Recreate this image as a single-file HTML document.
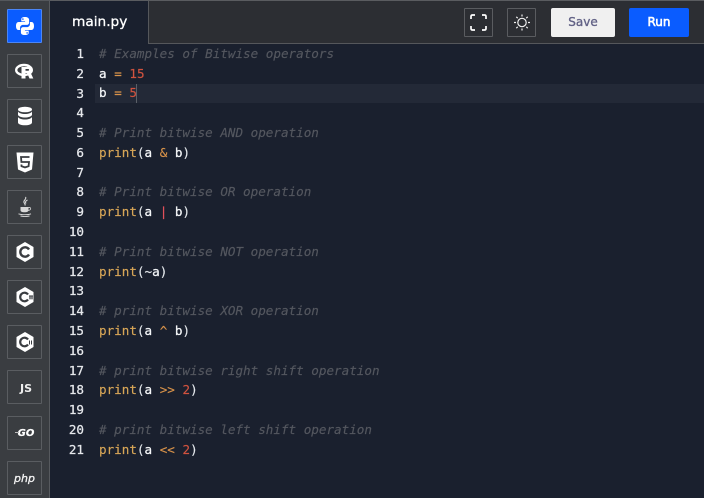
<!DOCTYPE html>
<html><head><meta charset="utf-8">
<style>
*{box-sizing:border-box}
html,body{margin:0;padding:0}
body{width:704px;height:498px;overflow:hidden;background:#1a202e;position:relative;font-family:"DejaVu Sans",sans-serif}
.abs{position:absolute}
#side{left:0;top:0;width:50px;height:498px;background:#3a3d41;border-right:1px solid #575a5e;border-top:1px solid #55585c}
#top{left:50px;top:0;width:654px;height:44px;background:#2c2e33;border-top:1px solid #5a5c60;border-bottom:1px solid #55575b}
#tab{left:50px;top:1px;width:99px;height:43px;background:#1a202e;border-right:1px solid #55575b;color:#fff;font-size:13.700px;-webkit-text-stroke:.3px #fff;line-height:43px;padding-left:22px}
.box{position:absolute;left:7px;width:35px;height:34px;border:1px solid #5a5d61;border-radius:1px;display:flex;align-items:center;justify-content:center}
.box svg{display:block}
.tb{position:absolute;top:8px;width:29px;height:29px;border:1px solid #5a5c60;border-radius:1px}
.btn{position:absolute;top:8px;height:29px;border-radius:2px;text-align:center;font-size:12px;line-height:28px}
#cur{left:95px;top:84px;width:609px;height:19px;background:#232937}
#caret{left:136px;top:84px;width:1px;height:19px;background:#5b6068}
.n,.l{position:absolute;white-space:pre;font-family:"DejaVu Sans Mono",monospace;font-size:12.600px;line-height:20px;height:20px}
.n{left:60px;width:24px;text-align:right;color:#e6e8ec;-webkit-text-stroke:.25px #e6e8ec;margin-top:-.5px}
.l{left:99px;color:#e8eaee;-webkit-text-stroke:.15px}
.c{color:#54575f;font-style:italic}
.f{color:#d8a657}
.o{color:#d9934a}
.d{color:#d0533f}
.v{color:#f4f6f8;-webkit-text-stroke:.25px #f4f6f8}
.p{color:#e4e8ec}
</style></head>
<body>
<div class="abs" id="side">
<div class="box" style="top:8px;background:#0a5cff;border-color:#4c86f5">
<svg width="20" height="20" viewBox="0 0 20 20" fill="#fff"><path d="M9.900 1C6.800 1 6.300 2.200 6.300 3.500V5.400h3.800V6H3.600C2 6 1 7.400 1 10s1 4 2.400 4h1.700v-2.200c0-1.600 1.300-2.900 2.900-2.900h3.900c1.200 0 2.200-1 2.200-2.300V3.500C13.800 2 12.500 1 9.900 1zM7.900 2.300a.8.8 0 1 1 0 1.600.8.8 0 0 1 0-1.600z"/><path d="M10.100 19c3.100 0 3.600-1.200 3.600-2.500v-1.900H9.900V14h6.500c1.600 0 2.600-1.400 2.600-4s-1-4-2.400-4h-1.700v2.200c0 1.600-1.300 2.900-2.900 2.900H8.100c-1.200 0-2.200 1-2.200 2.300v3.100c0 1.500 1.300 2.500 3.900 2.500zm2-1.300a.8.8 0 1 1 0-1.600.8.8 0 0 1 0 1.600z"/></svg></div>
<div class="box" style="top:53px"><svg width="22" height="19" viewBox="0 0 22 19"><ellipse cx="10" cy="8" rx="7.800" ry="5" fill="none" stroke="#fff" stroke-width="2.400"/><path d="M7.500 5h7.800c3.200 0 3.500 4 1 5l3 6.500h-3.800l-2.400-5.500h-1.600v5.500H7.500z" fill="#fff"/><path d="M11.500 7h2.800c1 0 1 1.700 0 1.700h-2.800z" fill="#3a3d41"/></svg></div>
<div class="box" style="top:98px"><svg width="16" height="20" viewBox="0 0 16 20" fill="#fff"><ellipse cx="8" cy="3.500" rx="7" ry="2.800"/><path d="M1 5.500c1 1.700 3.700 2.500 7 2.500s6-.8 7-2.500V9c-1 1.700-3.700 2.500-7 2.500S2 10.700 1 9z"/><path d="M1 11c1 1.700 3.700 2.500 7 2.500s6-.8 7-2.500v5.500c0 1.600-3.100 2.800-7 2.800s-7-1.200-7-2.800z"/></svg></div>
<div class="box" style="top:144px"><svg width="18" height="21" viewBox="0 0 18 21"><path d="M.5 .5h17l-1.500 17L9 20.500 2 17.500z" fill="#fff"/><path d="M13.500 5H5l.4 5h7.600l-.4 4.200-3.600 1.200-3.500-1.200-.1-1.700" fill="none" stroke="#3a3d41" stroke-width="1.800"/></svg></div>
<div class="box" style="top:189px"><svg width="16" height="22" viewBox="0 0 16 22" fill="none" stroke="#d8d8d8"><path d="M8.500 1c1.500 2-2.500 3.500-1.500 5.500.5 1 1.500 1.500 1 3M10.500 4c-2 1-2.500 2-1.500 3.500" stroke-width="1.100"/><path d="M3.500 11h8v3c0 1.500-1.300 2.300-4 2.300s-4-.8-4-2.300z" fill="#d8d8d8" stroke="none"/><path d="M11.500 11.500c3-.5 3 2.500-.5 3" stroke-width=".8"/><path d="M1.500 17.800c3 1.200 10 1.200 12.500 0M3.500 20c2.500.6 6.500.6 9 0" stroke-width=".9"/></svg></div>
<div class="box" style="top:234px"><svg width="20" height="22" viewBox="0 0 20 22"><path d="M10 1l8.500 5v10L10 21l-8.500-5V6z" fill="#fff"/><path d="M14 13.500a4.700 4.700 0 1 1 0-5" fill="none" stroke="#3a3d41" stroke-width="2.400"/></svg></div>
<div class="box" style="top:279px"><svg width="20" height="22" viewBox="0 0 20 22"><path d="M10 1l8.500 5v10L10 21l-8.500-5V6z" fill="#fff"/><path d="M13 13.500a4.300 4.300 0 1 1 0-5" fill="none" stroke="#3a3d41" stroke-width="2.200"/><path d="M14 10.200h4M14 12h4M15 9v4.500M17 9v4.500" stroke="#3a3d41" stroke-width=".8"/></svg></div>
<div class="box" style="top:324px"><svg width="20" height="22" viewBox="0 0 20 22"><path d="M10 1l8.500 5v10L10 21l-8.500-5V6z" fill="#fff"/><path d="M13 13.500a4.300 4.300 0 1 1 0-5" fill="none" stroke="#3a3d41" stroke-width="2.200"/><path d="M14.500 9.500v4M16.500 9.500v4" stroke="#3a3d41" stroke-width="1"/></svg></div>
<div class="box" style="top:369px;color:#eee;font-size:11px;font-weight:700;padding-left:3px;padding-top:3px">JS</div>
<div class="box" style="top:415px;color:#fff;font-size:10px;font-weight:700;font-style:italic;padding-left:3px;-webkit-text-stroke:.2px #fff"><span style="position:absolute;left:7px;top:15px;width:4px;height:1px;background:#bbb"></span>GO</div>
<div class="box" style="top:460px;color:#f4f4f4;font-size:11px;font-style:italic;-webkit-text-stroke:.3px #f4f4f4">php</div>
</div>
<div class="abs" id="top"></div>
<div class="abs" id="tab">main.py</div>
<div class="tb" style="left:464px"><svg width="27" height="27" viewBox="0 0 27 27" fill="none" stroke="#fff" stroke-width="1.700"><path d="M6 10V7.500Q6 6 7.500 6H10M17 6h2.500Q21 6 21 7.500V10M21 17v2.500Q21 21 19.500 21H17M10 21H7.500Q6 21 6 19.500V17"/></svg></div>
<div class="tb" style="left:507px"><svg width="27" height="27" viewBox="0 0 27 27" fill="none" stroke="#f0f0f0" stroke-width="1.200"><circle cx="14" cy="13.500" r="4.200"/><path d="M14 5.500v2M14 19.500v2M6 13.500h2M20 13.500h2M8.300 7.800l1.400 1.400M18.300 17.800l1.400 1.400M8.300 19.200l1.400-1.400M18.300 9.200l1.400-1.400"/></svg></div>
<div class="btn" style="left:551px;width:64px;background:#f0f0f0;color:#626286;-webkit-text-stroke:.35px #626286">Save</div>
<div class="btn" style="left:629px;width:60px;background:#0a5cff;color:#fff;-webkit-text-stroke:.6px #fff">Run</div>

<div class="abs" id="cur"></div>
<div class="abs" id="caret"></div>

<div class="n" style="top:44px">1</div><div class="l c" style="top:44px"># Examples of Bitwise operators</div>
<div class="n" style="top:64px">2</div><div class="l" style="top:64px"><span class="v">a</span> <span class="o">=</span> <span class="d">15</span></div>
<div class="n" style="top:84px">3</div><div class="l" style="top:83px"><span class="v">b</span> <span class="o">=</span> <span class="d">5</span></div>
<div class="n" style="top:103px">4</div>
<div class="n" style="top:123px">5</div><div class="l c" style="top:123px"># Print bitwise AND operation</div>
<div class="n" style="top:143px">6</div><div class="l" style="top:143px"><span class="f">print</span><span class="p">(</span><span class="v">a</span> <span class="o">&amp;</span> <span class="v">b</span><span class="p">)</span></div>
<div class="n" style="top:163px">7</div>
<div class="n" style="top:182px">8</div><div class="l c" style="top:182px"># Print bitwise OR operation</div>
<div class="n" style="top:202px">9</div><div class="l" style="top:202px"><span class="f">print</span><span class="p">(</span><span class="v">a</span> <span style="color:#e0505a">|</span> <span class="v">b</span><span class="p">)</span></div>
<div class="n" style="top:222px">10</div>
<div class="n" style="top:242px">11</div><div class="l c" style="top:242px"># Print bitwise NOT operation</div>
<div class="n" style="top:262px">12</div><div class="l" style="top:262px"><span class="f">print</span><span class="p">(</span><span class="p">~</span><span class="v">a</span><span class="p">)</span></div>
<div class="n" style="top:281px">13</div>
<div class="n" style="top:301px">14</div><div class="l c" style="top:301px"># print bitwise XOR operation</div>
<div class="n" style="top:321px">15</div><div class="l" style="top:321px"><span class="f">print</span><span class="p">(</span><span class="v">a</span> <span class="o">^</span> <span class="v">b</span><span class="p">)</span></div>
<div class="n" style="top:341px">16</div>
<div class="n" style="top:361px">17</div><div class="l c" style="top:361px"># print bitwise right shift operation</div>
<div class="n" style="top:380px">18</div><div class="l" style="top:380px"><span class="f">print</span><span class="p">(</span><span class="v">a</span> <span class="o">&gt;&gt;</span> <span class="d">2</span><span class="p">)</span></div>
<div class="n" style="top:400px">19</div>
<div class="n" style="top:420px">20</div><div class="l c" style="top:420px"># print bitwise left shift operation</div>
<div class="n" style="top:440px">21</div><div class="l" style="top:440px"><span class="f">print</span><span class="p">(</span><span class="v">a</span> <span class="o">&lt;&lt;</span> <span class="d">2</span><span class="p">)</span></div>
</body></html>
